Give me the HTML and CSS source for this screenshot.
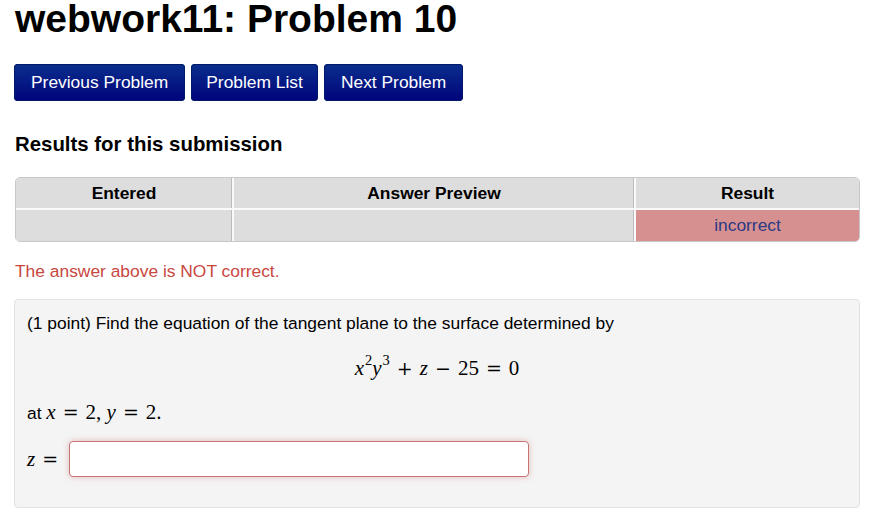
FILE: index.html
```html
<!DOCTYPE html>
<html>
<head>
<meta charset="utf-8">
<link rel="stylesheet" href="styles.css">
</head>
<body>
<div class="page">
  <h1 class="title">webwork11: Problem 10</h1>
  <div class="nav">
    <a class="btn">Previous Problem</a>
    <a class="btn btn-list">Problem List</a>
    <a class="btn">Next Problem</a>
  </div>
  <h3 class="results-title">Results for this submission</h3>
  <div class="results">
    <div class="row head">
      <div class="cell c1">Entered</div>
      <div class="cell c2">Answer Preview</div>
      <div class="cell c3">Result</div>
    </div>
    <div class="row">
      <div class="cell c1"></div>
      <div class="cell c2"></div>
      <div class="cell c3 bad">incorrect</div>
    </div>
  </div>
  <div class="msg">The answer above is NOT correct.</div>
  <div class="problem">
    <p class="q">(1 point) Find the equation of the tangent plane to the surface determined by</p>
    <div class="display"><span class="m"><i>x</i><sup>2</sup><i>y</i><sup>3</sup><span class="op">+</span><i>z</i><span class="op">−</span>25<span class="op">=</span>0</span></div>
    <p class="at">at <span class="m"><i>x</i><span class="op">=</span>2, <i>y</i><span class="op">=</span>2.</span></p>
    <div class="answer"><span class="m"><i>z</i><span class="op">=</span></span><div class="input"></div></div>
  </div>
</div>
</body>
</html>
```
FILE: styles.css
```css
html, body { margin: 0; padding: 0; background: #fff; }
body { font-family: "Liberation Sans", Arial, sans-serif; color: #000; }
.page { padding: 0 23px 0 14px; }
.title { margin: 0; font-size: 39px; line-height: 37px; font-weight: bold; padding-left: 1px; }
.nav { display: flex; gap: 6px; margin-top: 27px; }
.btn { display: block; height: 37px; line-height: 37px; padding: 0 17px; color: #fff; font-size: 17.4px; border-radius: 4px;
  background: linear-gradient(#0a2f8c, #00037c); box-shadow: inset 0 0 0 1px #001a6a; }
.btn-list { padding: 0 15px; }
.results-title { margin: 32px 0 0 1px; font-size: 20.4px; line-height: 22px; font-weight: bold; }
.results { margin-top: 22px; margin-left: 1px; border: 1px solid #c8c8c8; border-radius: 5px; overflow: hidden; }
.row { display: flex; }
.cell { background: #dddddd; text-align: center; font-size: 17.4px; box-sizing: border-box; border-right: 2px solid #fafafa; box-shadow: inset -1px 0 0 #bcbcbc; }
.row + .row .cell { border-top: 2px solid #fafafa; }
.head .cell { height: 30px; line-height: 30px; font-weight: bold; }
.row + .row .cell { height: 33px; line-height: 31px; }
.c1 { width: 218px; }
.c2 { width: 402px; }
.c3 { flex: 1; border-right: none; box-shadow: none; }
.bad { background: #d79090; color: #2a3a85; }
.msg { color: #c8473f; font-size: 17.4px; margin: 19px 0 0 1px; line-height: 20px; }
.problem { margin-top: 18px; background: #f4f4f4; border: 1px solid #e2e2e2; border-radius: 4px; padding: 12px 12px 30px; }
.q { margin: 0; font-size: 17.4px; line-height: 22px; }
.m { font-family: "Liberation Serif", serif; font-size: 21px; }
.m i { font-family: "Liberation Serif", serif; }
.m sup { font-size: 14.5px; vertical-align: 10px; line-height: 0; margin-left: 1px; }
.op { font-family: "DejaVu Serif", serif; font-size: 19px; margin: 0 7px; }
.display { text-align: center; margin-top: 22px; line-height: 24px; }
.at { margin: 18px 0 0; font-size: 17.4px; line-height: 24px; }
.answer { display: flex; align-items: center; gap: 4px; margin-top: 16px; }
.input { width: 458px; height: 34px; background: #fff; border: 1px solid #c87474; border-radius: 4px; box-shadow: 0 0 6px rgba(200, 80, 80, 0.35); }
```
